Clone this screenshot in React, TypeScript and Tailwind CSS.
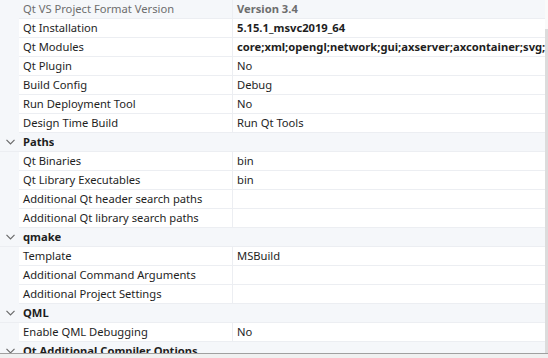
import { ReactNode } from 'react'

type Row =
  | { kind: 'cat'; label: string }
  | { kind: 'prop'; label: string; value?: string; bold?: boolean; disabled?: boolean }

const rows: Row[] = [
  { kind: 'prop', label: 'Qt VS Project Format Version', value: 'Version 3.4', bold: true, disabled: true },
  { kind: 'prop', label: 'Qt Installation', value: '5.15.1_msvc2019_64', bold: true },
  { kind: 'prop', label: 'Qt Modules', value: 'core;xml;opengl;network;gui;axserver;axcontainer;svg;', bold: true },
  { kind: 'prop', label: 'Qt Plugin', value: 'No' },
  { kind: 'prop', label: 'Build Config', value: 'Debug' },
  { kind: 'prop', label: 'Run Deployment Tool', value: 'No' },
  { kind: 'prop', label: 'Design Time Build', value: 'Run Qt Tools' },
  { kind: 'cat', label: 'Paths' },
  { kind: 'prop', label: 'Qt Binaries', value: 'bin' },
  { kind: 'prop', label: 'Qt Library Executables', value: 'bin' },
  { kind: 'prop', label: 'Additional Qt header search paths' },
  { kind: 'prop', label: 'Additional Qt library search paths' },
  { kind: 'cat', label: 'qmake' },
  { kind: 'prop', label: 'Template', value: 'MSBuild' },
  { kind: 'prop', label: 'Additional Command Arguments' },
  { kind: 'prop', label: 'Additional Project Settings' },
  { kind: 'cat', label: 'QML' },
  { kind: 'prop', label: 'Enable QML Debugging', value: 'No' },
  { kind: 'cat', label: 'Qt Additional Compiler Options' },
]

function Chevron() {
  return (
    <svg width="9" height="6" viewBox="0 0 9 6" fill="none">
      <path d="M0.5 0.8 L4.5 4.8 L8.5 0.8" stroke="#6a6a6a" strokeWidth="1.2" />
    </svg>
  )
}

function Cell({ children, className }: { children?: ReactNode; className?: string }) {
  return <div className={`flex items-center overflow-hidden whitespace-nowrap ${className ?? ''}`}>{children}</div>
}

export default function App() {
  return (
    <div
      className="w-[548px] h-[358px] bg-[#f0f0f0] overflow-hidden text-[11.2px] leading-none text-[#1e1e1e]"
      style={{ fontFamily: '"Segoe UI", "Noto Sans", sans-serif' }}
    >
      <div className="h-[354px] flex overflow-hidden border-b border-[#a0a0a0] bg-[#f5f7fa]">
        <div className="flex-1 flex flex-col">
          {rows.map((r, i) =>
            r.kind === 'cat' ? (
              <div key={i} className="h-[19px] shrink-0 flex bg-[#f5f7fa] border-b border-[#eceef2]">
                <Cell className="w-[19px] justify-center pl-[1px]">
                  <Chevron />
                </Cell>
                <Cell className="pl-[4px] font-bold">{r.label}</Cell>
              </div>
            ) : (
              <div key={i} className="h-[19px] shrink-0 flex">
                <div className="w-[19px] shrink-0 bg-[#f5f7fa]" />
                <div
                  className={`flex flex-1 border-b border-[#eceef2] ${r.disabled ? 'bg-[#f5f7fa] text-[#6d6d6d]' : 'bg-white'}`}
                >
                  <Cell className="w-[214px] shrink-0 pl-[4px] border-r border-[#eceef2]">{r.label}</Cell>
                  <Cell className={`flex-1 pl-[4px] ${r.bold ? 'font-bold' : ''}`}>{r.value}</Cell>
                </div>
              </div>
            ),
          )}
        </div>
        <div className="w-[3px] flex flex-col bg-[#fafafa]">
          <div className="h-[29px]" />
          <div className="flex-1 bg-[#dcdcdc]" />
        </div>
      </div>
    </div>
  )
}
